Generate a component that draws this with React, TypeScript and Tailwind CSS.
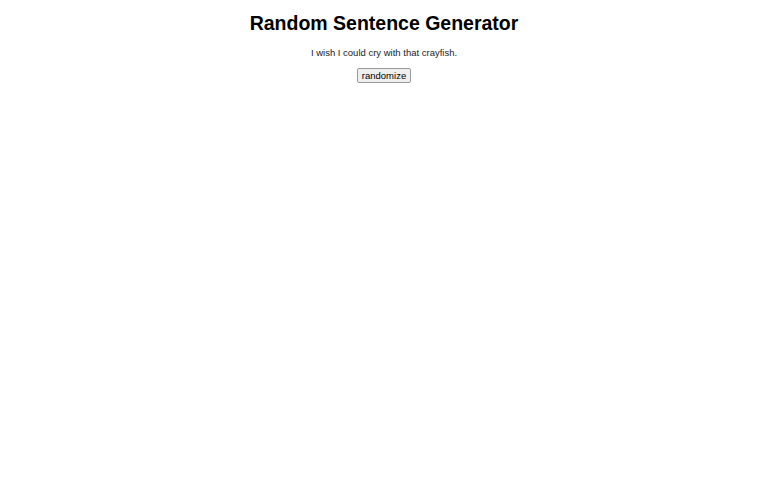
export default function App() {
  return (
    <div className="min-h-screen bg-white text-center text-black" style={{ fontFamily: '"Liberation Sans", Arial, sans-serif' }}>
      <h1 className="pt-[12px] text-[19.5px] font-bold leading-[22px]">Random Sentence Generator</h1>
      <p className="mt-[13px] text-[9.5px] leading-[12px] text-[#222]">I wish I could cry with that crayfish.</p>
      <button className="mt-[9px] rounded-[2px] border border-[#999] bg-[#efefef] px-[4px] py-[1px] text-[9.5px] leading-[11px]">randomize</button>
    </div>
  );
}
